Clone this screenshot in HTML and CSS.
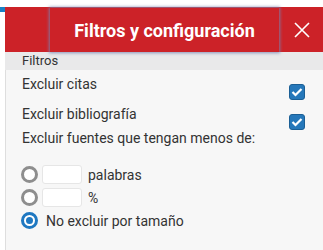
FILE: index.html
```html
<!DOCTYPE html>
<html lang="es">
<head>
    <meta charset="UTF-8">
    <title>Filtros y configuración</title>
    <link rel="stylesheet" href="styles.css">
</head>
<body>
    <div class="behind"></div>
    <div class="panel">
        <div class="panel-head">
            <div class="head-space"></div>
            <div class="head-title">Filtros y configuración</div>
            <div class="head-close">
                <svg width="16" height="16" viewBox="0 0 16 16">
                    <path d="M1 1 L15 15 M15 1 L1 15" stroke="#fff" stroke-width="1.6" fill="none"/>
                </svg>
            </div>
        </div>
        <div class="section-bar">Filtros</div>
        <div class="panel-body">
            <div class="check-row">
                <span>Excluir citas</span>
                <span class="check"><svg width="12" height="10" viewBox="0 0 12 10"><path d="M1.5 5 L4.5 8 L10.5 2" stroke="#fff" stroke-width="2.2" fill="none"/></svg></span>
            </div>
            <div class="check-row">
                <span>Excluir bibliografía</span>
                <span class="check"><svg width="12" height="10" viewBox="0 0 12 10"><path d="M1.5 5 L4.5 8 L10.5 2" stroke="#fff" stroke-width="2.2" fill="none"/></svg></span>
            </div>
            <div class="size-label">Excluir fuentes que tengan menos de:</div>

            <div class="radios">
                <div class="radio-row">
                    <span class="radio"></span>
                    <span class="num-box"></span>
                    <span class="unit">palabras</span>
                </div>
                <div class="radio-row">
                    <span class="radio"></span>
                    <span class="num-box"></span>
                    <span class="unit">%</span>
                </div>
                <div class="radio-row">
                    <span class="radio on"></span>
                    <span class="unit">No excluir por tamaño</span>
                </div>
            </div>
        </div>
    </div>
</body>
</html>
```

FILE: styles.css
```css
* {
    margin: 0;
    padding: 0;
    box-sizing: border-box;
}
body {
    background-color: #ffffff;
    font-family: Roboto, "Liberation Sans", Arial, sans-serif;
    color: #333333;
    overflow: hidden;
}
.behind {
    position: absolute;
    left: 0;
    top: 7px;
    width: 5px;
    height: 5px;
    background-color: #1a80c4;
}
.panel {
    margin: 7px 0 0 5px;
}
.panel-head {
    display: flex;
    height: 45px;
    background-color: #cc2228;
}
.head-space {
    width: 45px;
}
.head-title {
    width: 229px;
    margin-top: 1px;
    color: #ffffff;
    font-size: 18px;
    font-weight: bold;
    display: flex;
    align-items: center;
    justify-content: center;
    box-shadow: 0 0 3px 1px rgba(120, 130, 175, 0.85);
}
.head-close {
    flex: 1;
    display: flex;
    align-items: center;
    justify-content: center;
    padding-left: 2px;
}
.section-bar {
    height: 18px;
    line-height: 18px;
    font-size: 13px;
    padding-left: 17px;
    background-color: #e9e9ea;
}
.panel-body {
    background-color: #f7f7f7;
    border-left: 1px solid #dedede;
    padding: 4px 18px 30px 16px;
    font-size: 14px;
    line-height: 20px;
}
.check-row {
    display: flex;
    justify-content: space-between;
    height: 30px;
}
.check {
    width: 16px;
    height: 16px;
    margin-top: 10px;
    border-radius: 3px;
    background-color: #2678ba;
    border: 1px solid #1b5f95;
    display: flex;
    align-items: center;
    justify-content: center;
}
.size-label {
    margin-top: -6px;
}
.radios {
    margin: 15px 0 0 -1px;
}
.radio-row {
    display: flex;
    align-items: center;
    height: 23px;
}
.radio {
    width: 17px;
    height: 17px;
    border-radius: 50%;
    border: 3px solid #8e8e8e;
    background-color: #ffffff;
    margin-right: 4px;
}
.radio.on {
    border-color: #1f78c1;
    position: relative;
    margin-right: 8px;
}
.radio.on::after {
    content: "";
    position: absolute;
    left: 2px;
    top: 2px;
    width: 7px;
    height: 7px;
    border-radius: 50%;
    background-color: #1f78c1;
}
.num-box {
    width: 40px;
    height: 19px;
    background-color: #ffffff;
    border: 1px solid #e6e6e6;
    border-radius: 3px;
    margin-right: 6px;
}
.unit {
    color: #333333;
}
```
